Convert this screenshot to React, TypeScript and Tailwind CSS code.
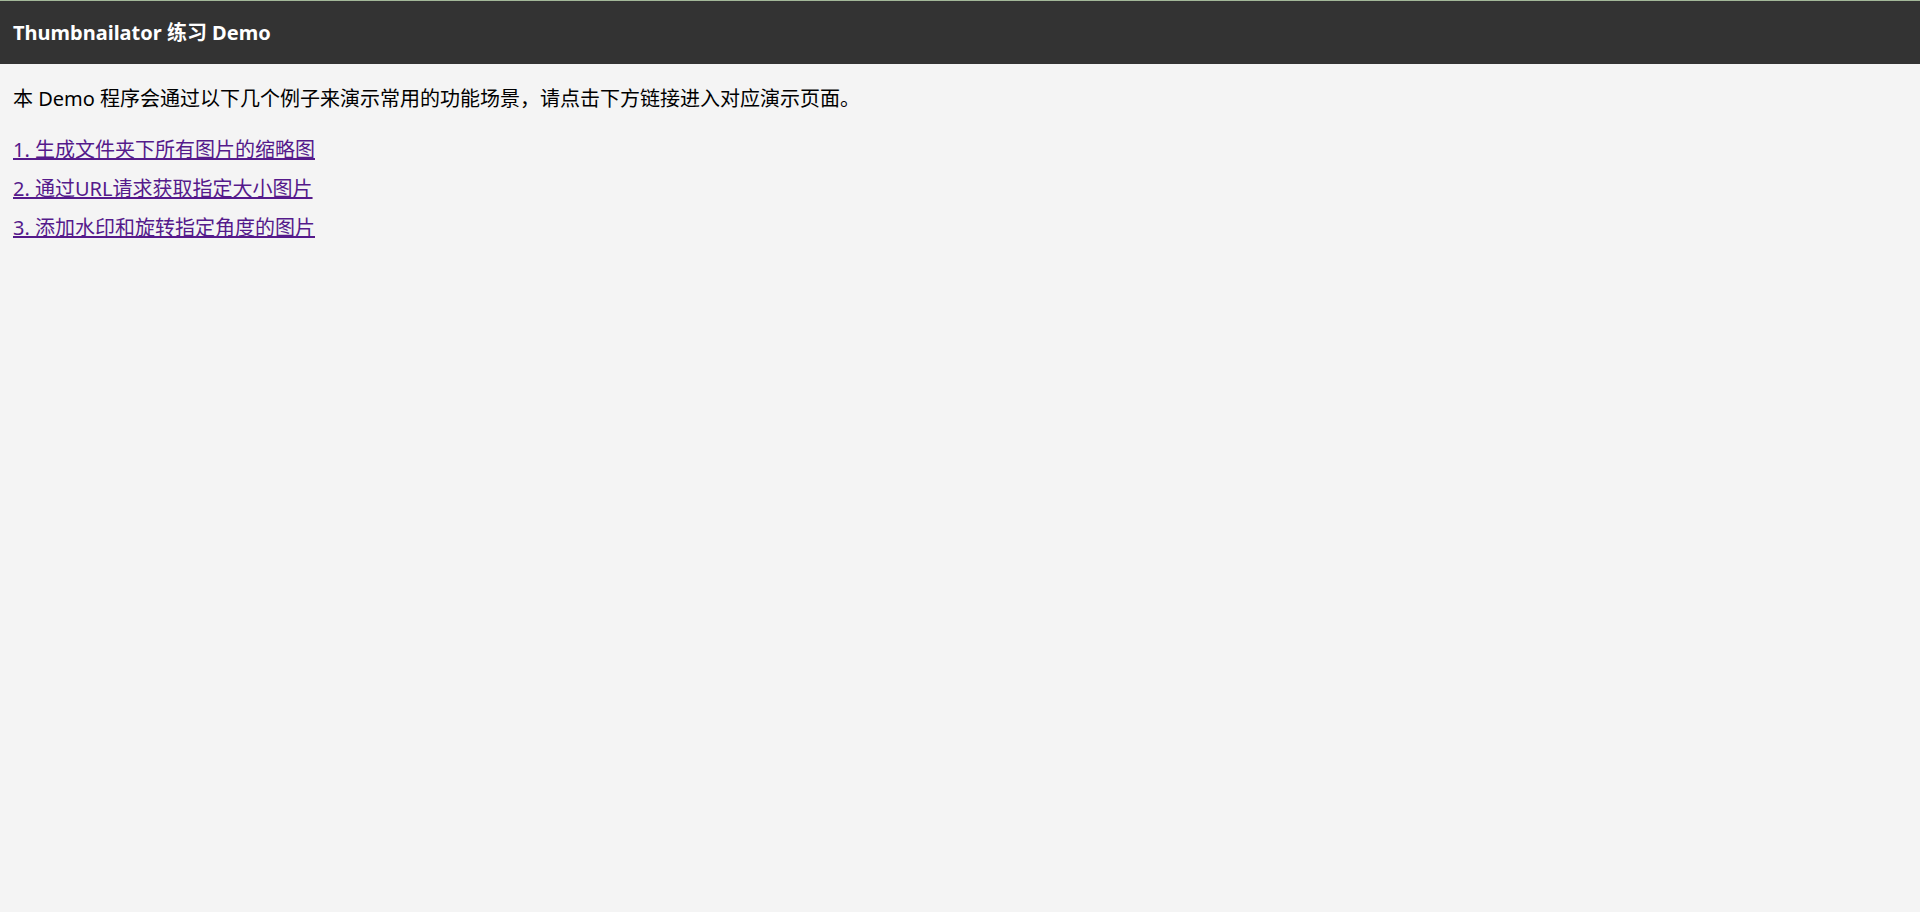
import React from 'react';

const links = [
  '1. 生成文件夹下所有图片的缩略图',
  '2. 通过URL请求获取指定大小图片',
  '3. 添加水印和旋转指定角度的图片',
];

const font = { fontFamily: '"Noto Sans", "Noto Sans CJK SC", sans-serif' };

export default function App() {
  return (
    <div className="min-h-screen bg-[#f4f4f4] text-black" style={font}>
      <header className="h-[64px] border-t border-[#a3b899] bg-[#333333] flex items-center px-[13px] pt-[1px]">
        <h1 className="text-[20px] font-bold text-white leading-none">Thumbnailator 练习 Demo</h1>
      </header>
      <main className="px-[13px] pt-[20px]">
        <p className="text-[20px] leading-[30px]">本 Demo 程序会通过以下几个例子来演示常用的功能场景，请点击下方链接进入对应演示页面。</p>
        <div className="mt-[21px] flex flex-col gap-[9px]">
          {links.map(l => (
            <a key={l} href="#" className="text-[20px] leading-[30px] text-[#551a8b] underline w-fit">{l}</a>
          ))}
        </div>
      </main>
    </div>
  );
}
